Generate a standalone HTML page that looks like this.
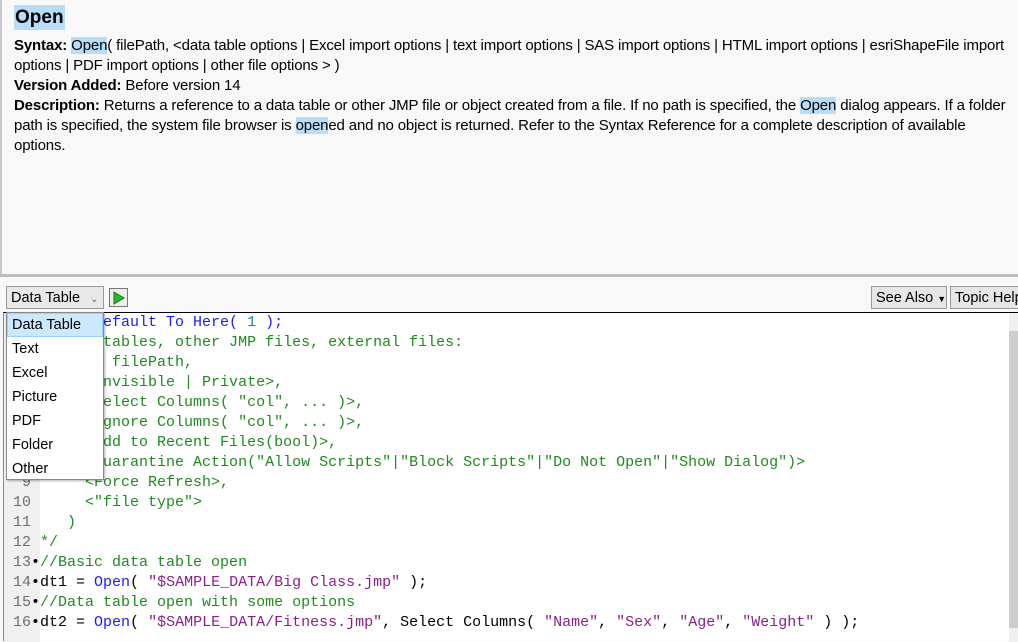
<!DOCTYPE html>
<html><head><meta charset="utf-8"><style>
*{margin:0;padding:0;box-sizing:border-box}
body{width:1018px;height:641px;overflow:hidden;background:#f8f8f8;font-family:"Liberation Sans",sans-serif;position:relative;color:#000}
.lb{position:absolute;left:0;top:0;width:2px;height:275px;background:#c8c8c8}
.top{position:absolute;left:14px;top:5px}
h1{font-size:19px;font-weight:bold;background:#b9dcf7;display:inline-block;padding:0 1px;height:25px;line-height:25px;margin-bottom:6px}
.t{font-size:15px;line-height:20px;white-space:nowrap;letter-spacing:-0.15px}
.hl{background:#b9dcf7}
.sep{position:absolute;left:0;top:274px;width:1018px;height:3px;background:#bdbdbd}
.btn{position:absolute;top:286px;height:23px;border:1px solid #999;background:#e6e6e6;font-size:14.5px;line-height:22px;padding:0 4px;white-space:nowrap}
.ed{position:absolute;left:3px;top:312px;width:1015px;height:329px;background:#fff;border-top:1px solid #000;border-left:1px solid #888}
.gut{position:absolute;left:0;top:0;width:36px;height:329px;background:#f0f0f0}
.code{position:absolute;left:0;top:0;font-family:"Liberation Mono",monospace;font-size:15px;line-height:20px;white-space:pre}
.ln{color:#6e6e6e}
.c{color:#1f8a1f}.k{color:#1a1aff}.n{color:#0b8a8a}.s{color:#8a1f8a}
.sb{position:absolute;left:1005px;top:0;width:10px;height:329px;background:#f0f0f0}
.th{position:absolute;left:1005px;top:18px;width:10px;height:297px;background:#cdcdcd}
.dd{position:absolute;left:6px;top:312px;width:98px;height:168px;background:#fff;border:1px solid #888;box-shadow:1px 1px 2px rgba(0,0,0,.3)}
.it{height:24px;line-height:24px;font-size:14.5px;padding-left:5px}
.sel{background:#cce8ff;border:1px solid #99d1ff;line-height:22px;padding-left:4px}
</style></head><body>
<div class="lb"></div>
<div class="top">
<h1>Open</h1>
<div class="t"><b>Syntax:</b> <span class="hl">Open</span>( filePath, &lt;data table options | Excel import options | text import options | SAS import options | HTML import options | esriShapeFile import</div>
<div class="t">options | PDF import options | other file options &gt; )</div>
<div class="t"><b>Version Added:</b> Before version 14</div>
<div class="t"><b>Description:</b> Returns a reference to a data table or other JMP file or object created from a file. If no path is specified, the <span class="hl">Open</span> dialog appears. If a folder</div>
<div class="t">path is specified, the system file browser is <span class="hl">open</span>ed and no object is returned. Refer to the Syntax Reference for a complete description of available</div>
<div class="t">options.</div>
</div>
<div class="sep"></div>
<div class="btn" style="left:6px;width:98px;background:#e8e8e8">Data Table <span style="font-size:10px;color:#666;margin-left:6px">⌄</span></div>
<div style="position:absolute;left:109px;top:288px;width:19px;height:19px;border:1px solid #777;background:#eee"><svg width="17" height="17"><path d="M4 3 L14 9 L4 15Z" fill="#2db52d" stroke="#137a13"/></svg></div>
<div class="btn" style="left:871px;width:76px">See Also <span style="font-size:9px">▼</span></div>
<div class="btn" style="left:950px;width:80px">Topic Help</div>
<div class="ed">
<div class="gut"></div>
<div class="code" style="top:0"><span class="ln">  1</span> <span class="k">Names Default To Here(</span> <span class="n">1</span> <span class="k">);</span>
<span class="ln">  2</span> <span class="c">/*Data tables, other JMP files, external files:</span>
<span class="ln">  3</span> <span class="c">  Open( filePath,</span>
<span class="ln">  4</span> <span class="c">     &lt;Invisible | Private&gt;,</span>
<span class="ln">  5</span> <span class="c">     &lt;Select Columns( "col", ... )&gt;,</span>
<span class="ln">  6</span> <span class="c">     &lt;Ignore Columns( "col", ... )&gt;,</span>
<span class="ln">  7</span> <span class="c">     &lt;Add to Recent Files(bool)&gt;,</span>
<span class="ln">  8</span> <span class="c">     &lt;Quarantine Action("Allow Scripts"|"Block Scripts"|"Do Not Open"|"Show Dialog")&gt;</span>
<span class="ln">  9</span> <span class="c">     &lt;Force Refresh&gt;,</span>
<span class="ln"> 10</span> <span class="c">     &lt;"file type"&gt;</span>
<span class="ln"> 11</span> <span class="c">   )</span>
<span class="ln"> 12</span> <span class="c">*/</span>
<span class="ln"> 13</span>•<span class="c">//Basic data table open</span>
<span class="ln"> 14</span>•dt1 = <span class="k">Open</span>( <span class="s">"$SAMPLE_DATA/Big Class.jmp"</span> );
<span class="ln"> 15</span>•<span class="c">//Data table open with some options</span>
<span class="ln"> 16</span>•dt2 = <span class="k">Open</span>( <span class="s">"$SAMPLE_DATA/Fitness.jmp"</span>, Select Columns( <span class="s">"Name"</span>, <span class="s">"Sex"</span>, <span class="s">"Age"</span>, <span class="s">"Weight"</span> ) );</div>
<div class="sb"></div><div class="th"></div>
</div>
<div class="dd">
<div class="it sel">Data Table</div>
<div class="it">Text</div>
<div class="it">Excel</div>
<div class="it">Picture</div>
<div class="it">PDF</div>
<div class="it">Folder</div>
<div class="it">Other</div>
</div>
</body></html>
